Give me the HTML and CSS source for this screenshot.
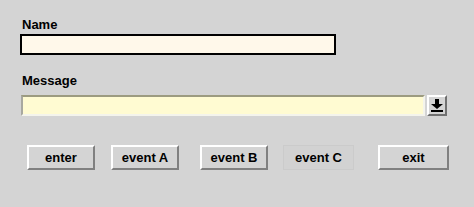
FILE: index.html
```html
<!DOCTYPE html>
<html>
<head>
  <link rel="stylesheet" href="styles.css">
</head>
<body>
  <form class="panel">
    <label class="field-label" for="name">Name</label>
    <input class="name-input" type="text" id="name" name="name">

    <label class="field-label msg-label" for="message">Message</label>
    <div class="message-row">
      <input class="message-input" type="text" id="message" name="message">
      <button type="button" class="icon-btn" title="Load">
        <svg width="12" height="13" viewBox="0 0 12 13">
          <rect x="4" y="0" width="4" height="5" fill="#000"/>
          <polygon points="0,5 12,5 6,10" fill="#000"/>
          <rect x="0" y="11" width="12" height="2" fill="#000"/>
        </svg>
      </button>
    </div>

    <div class="button-row">
      <button type="button" class="btn">enter</button>
      <button type="button" class="btn">event A</button>
      <button type="button" class="btn wide-gap">event B</button>
      <button type="button" class="btn flat">event C</button>
      <button type="button" class="btn widest-gap">exit</button>
    </div>
  </form>
</body>
</html>
```

FILE: styles.css
```css
html, body {
  margin: 0;
  padding: 0;
  background: #d4d4d4;
}

body {
  font-family: "Liberation Sans", Arial, sans-serif;
  font-size: 12px;
  font-weight: bold;
  color: #000;
}

.panel {
  display: flex;
  flex-direction: column;
  align-items: flex-start;
  width: 474px;
  height: 207px;
  box-sizing: border-box;
  padding: 17px 0 0 20px;
}

.field-label {
  display: block;
  margin-left: 2px;
  font-size: 13px;
  line-height: 16px;
}

.name-input {
  box-sizing: border-box;
  width: 316px;
  height: 21px;
  margin: 1px 0 0 0;
  padding: 0 3px;
  border: 2px solid #000;
  background: #fff8ea;
  outline: none;
}

.msg-label {
  margin-top: 18px;
}

.message-row {
  display: flex;
  align-items: center;
  margin-top: 6px;
  margin-left: 1px;
}

.message-input {
  box-sizing: border-box;
  width: 404px;
  height: 21px;
  margin: 0;
  padding: 0 3px;
  border-style: solid;
  border-width: 2px;
  border-color: #9c9b80 #f4f4ec #f4f4ec #a8a8a0;
  background: #fffbd2;
  outline: none;
}

.icon-btn {
  box-sizing: border-box;
  width: 20px;
  height: 21px;
  margin-left: 2px;
  padding: 0;
  display: flex;
  align-items: center;
  justify-content: center;
  background: #d4d4d4;
  border-style: solid;
  border-width: 2px;
  border-color: #ffffff #707070 #707070 #ffffff;
}

.button-row {
  display: flex;
  margin-top: 29px;
  margin-left: 7px;
}

.btn {
  box-sizing: border-box;
  width: 68px;
  height: 25px;
  margin-left: 16px;
  padding: 0;
  font-family: "Liberation Sans", Arial, sans-serif;
  font-size: 13px;
  font-weight: bold;
  color: #000;
  background: #d4d4d4;
  border-style: solid;
  border-width: 2px;
  border-color: #ffffff #808080 #808080 #ffffff;
  cursor: pointer;
}

.btn:first-child {
  margin-left: 0;
}

.btn.wide-gap {
  margin-left: 21px;
}

.btn.widest-gap {
  width: 71px;
  margin-left: 24px;
}

.btn.flat {
  width: 71px;
  margin-left: 15px;
  border: 1px solid #cbcbcb;
  background: #d2d2d2;
}
```
